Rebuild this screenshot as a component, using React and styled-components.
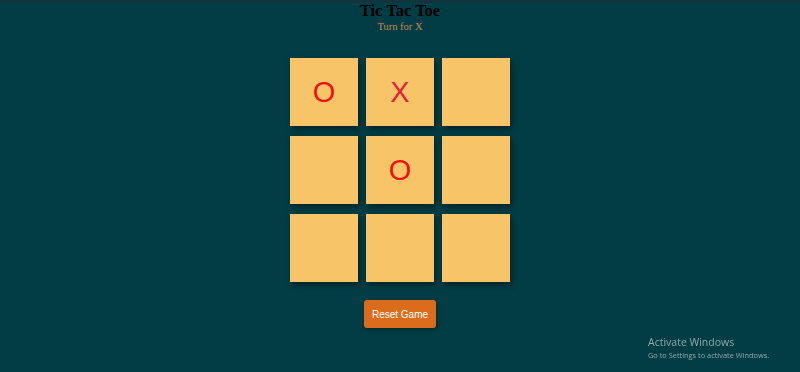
import React, { useState } from "react";
import styled, { createGlobalStyle } from "styled-components";

const GlobalStyle = createGlobalStyle`
  html, body {
    margin: 0;
    padding: 0;
    background: #023d45;
  }
`;

const Page = styled.div`
  min-height: 372px;
  box-sizing: border-box;
  border-top: 2px solid #14333a;
  display: flex;
  flex-direction: column;
  align-items: center;
  font-family: "Liberation Serif", "Times New Roman", serif;
`;

const Title = styled.h1`
  margin: 0;
  font-size: 16.5px;
  line-height: 18px;
  font-weight: bold;
  color: #000;
`;

const Status = styled.div`
  font-size: 10.5px;
  line-height: 13px;
  color: #c9874d;
`;

const Board = styled.div`
  margin-top: 25px;
  display: grid;
  grid-template-columns: repeat(3, 68px);
  grid-auto-rows: 68px;
  column-gap: 8px;
  row-gap: 10px;
`;

const Tile = styled.button`
  border: none;
  padding: 0;
  background: #f7c468;
  box-shadow: 2px 3px 6px rgba(0, 0, 0, 0.45);
  display: flex;
  align-items: center;
  justify-content: center;
  font-family: "Liberation Sans", Arial, sans-serif;
  font-size: 29px;
  color: ${props => (props.mark === "X" ? "#e3243a" : "#f01010")};
  cursor: pointer;
`;

const ResetButton = styled.button`
  margin-top: 18px;
  width: 72px;
  height: 28px;
  padding: 0;
  white-space: nowrap;
  border: none;
  border-radius: 3px;
  background: #db6c1b;
  color: #fff;
  font-family: "Liberation Sans", Arial, sans-serif;
  font-size: 10px;
  box-shadow: 1px 2px 4px rgba(0, 0, 0, 0.35);
  cursor: pointer;
`;

const Watermark = styled.div`
  position: fixed;
  left: 648px;
  top: 335px;
  font-family: "Open Sans", "Noto Sans", sans-serif;
  color: #93a9ad;
`;

const WatermarkTitle = styled.div`
  font-size: 10.5px;
  line-height: 14px;
`;

const WatermarkSub = styled.div`
  font-size: 7.4px;
  line-height: 12px;
`;

const start = ["O", "X", "", "", "O", "", "", "", ""];

export default function App() {
  const [cells, setCells] = useState(start);
  const [turn, setTurn] = useState("X");

  const play = i => {
    if (cells[i]) return;
    const next = cells.slice();
    next[i] = turn;
    setCells(next);
    setTurn(turn === "X" ? "O" : "X");
  };

  const reset = () => {
    setCells(Array(9).fill(""));
    setTurn("X");
  };

  return (
    <>
      <GlobalStyle />
      <Page>
        <Title>Tic Tac Toe</Title>
        <Status>Turn for {turn}</Status>
        <Board>
          {cells.map((c, i) => (
            <Tile key={i} mark={c} onClick={() => play(i)}>
              {c}
            </Tile>
          ))}
        </Board>
        <ResetButton onClick={reset}>Reset Game</ResetButton>
      </Page>
      <Watermark>
        <WatermarkTitle>Activate Windows</WatermarkTitle>
        <WatermarkSub>Go to Settings to activate Windows.</WatermarkSub>
      </Watermark>
    </>
  );
}
